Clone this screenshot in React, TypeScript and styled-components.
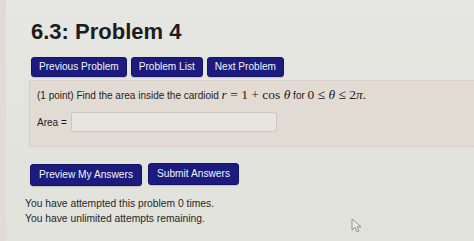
import React from "react";
import styled, { createGlobalStyle } from "styled-components";

const GlobalStyle = createGlobalStyle`
  html, body {
    margin: 0;
    padding: 0;
    background: #e4e3de;
  }
  body {
    font-family: "Liberation Sans", Arial, sans-serif;
    color: #1e1e1e;
  }
`;

const Page = styled.div`
  position: relative;
  width: 474px;
  height: 241px;
  overflow: hidden;
  box-sizing: border-box;
  padding: 19px 0 0 25px;
  background: linear-gradient(180deg, #e6e6e2 0%, #e2e2dc 100%);
  border-left: 6px solid #e0dbd6;
`;

const Title = styled.h1`
  margin: 0;
  font-size: 22px;
  line-height: 26px;
  font-weight: bold;
  color: #1c1c1c;
`;

const ButtonRow = styled.div<{ $gap: number }>`
  display: flex;
  gap: ${(p) => p.$gap}px;
`;

const NavRow = styled(ButtonRow)`
  margin-top: 12px;
`;

const SubmitRow = styled(ButtonRow)`
  margin-top: 17px;
  margin-left: -1px;
  align-items: flex-start;
`;

const Button = styled.button<{ $big?: boolean }>`
  background: #1c1b7e;
  color: #f4f4f8;
  border: 1px solid #15146a;
  border-radius: 3px;
  font-family: "Liberation Sans", Arial, sans-serif;
  font-size: ${(p) => (p.$big ? "10.2px" : "10.1px")};
  height: ${(p) => (p.$big ? "22px" : "20px")};
  padding: 0 ${(p) => (p.$big ? "8px" : "7px")};
  line-height: 1;
  cursor: pointer;
  box-shadow: 0 1px 1px rgba(0, 0, 0, 0.15);
`;

const ProblemBox = styled.div`
  margin-top: 3px;
  margin-left: -2px;
  margin-right: -10px;
  height: 67px;
  box-sizing: border-box;
  background: #e2dbd3;
  border: 1px solid #d9d1c9;
  border-right: none;
  padding: 6px 0 0 7px;
  font-size: 10px;
`;

const Statement = styled.div`
  line-height: 16px;
  color: #222;
`;

const Math = styled.span`
  font-family: "Liberation Serif", "Times New Roman", serif;
  font-size: 13.5px;
`;

const Var = styled.i`
  font-family: "Liberation Serif", "Times New Roman", serif;
`;

const AnswerRow = styled.div`
  display: flex;
  align-items: center;
  gap: 4px;
  margin-top: 8px;
`;

const Input = styled.div`
  width: 206px;
  height: 20px;
  box-sizing: border-box;
  background: #e8e5df;
  border: 1px solid #cdc6be;
  border-radius: 3px;
`;

const Info = styled.div`
  margin-top: 10px;
  margin-left: -6px;
  font-size: 10.3px;
  line-height: 15px;
  color: #262626;
`;

const Cursor = styled.svg`
  position: absolute;
  left: 345px;
  top: 218px;
`;

export default function App() {
  return (
    <>
      <GlobalStyle />
      <Page>
        <Title>6.3: Problem 4</Title>
        <NavRow $gap={4}>
          <Button>Previous Problem</Button>
          <Button>Problem List</Button>
          <Button>Next Problem</Button>
        </NavRow>
        <ProblemBox>
          <Statement>
            (1 point) Find the area inside the cardioid{" "}
            <Math>
              <Var>r</Var> = 1 + cos <Var>θ</Var>
            </Math>{" "}
            for{" "}
            <Math>
              0 ≤ <Var>θ</Var> ≤ 2<Var>π</Var>.
            </Math>
          </Statement>
          <AnswerRow>
            <span>Area =</span>
            <Input />
          </AnswerRow>
        </ProblemBox>
        <SubmitRow $gap={6}>
          <Button $big>Preview My Answers</Button>
          <Button $big style={{ marginTop: -1 }}>
            Submit Answers
          </Button>
        </SubmitRow>
        <Info>
          You have attempted this problem 0 times.
          <br />
          You have unlimited attempts remaining.
        </Info>
        <Cursor width="12" height="16" viewBox="0 0 12 16">
          <path
            d="M1 1 L1 12 L4 9.5 L6 14 L8 13 L6 8.8 L10 8.8 Z"
            fill="#e9e9e6"
            stroke="#8a8a88"
            strokeWidth="0.9"
            strokeLinejoin="round"
          />
        </Cursor>
      </Page>
    </>
  );
}
